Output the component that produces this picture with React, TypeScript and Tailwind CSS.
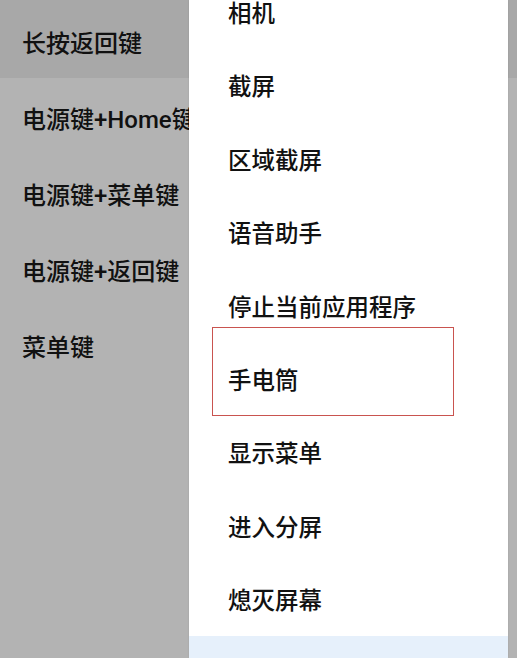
import React from "react";

const leftItems = ["电源键+Home键", "电源键+菜单键", "电源键+返回键", "菜单键"];
const menuItems = ["相机", "截屏", "区域截屏", "语音助手", "停止当前应用程序", "手电筒", "显示菜单", "进入分屏", "熄灭屏幕", ""];

export default function App() {
  return (
    <div
      className="relative w-[517px] h-[658px] overflow-hidden bg-[#b3b3b3] text-[#111111]"
      style={{ fontFamily: 'Roboto, "Noto Sans CJK SC", "Noto Sans", sans-serif' }}
    >
      <div className="flex flex-col">
        <div className="h-[78px] bg-[#a8a8a8] flex items-center pl-[22px] pt-[9px] text-[24px] font-medium whitespace-nowrap">
          长按返回键
        </div>
        <div className="flex flex-col pt-[4px]">
          {leftItems.map((t) => (
            <div key={t} className="h-[76px] flex items-center pl-[22px] text-[24px] font-medium whitespace-nowrap">
              {t}
            </div>
          ))}
        </div>
      </div>

      <div className="absolute left-[189px] top-0 w-[319px] h-[658px] bg-white overflow-hidden shadow-[0_0_2px_rgba(0,0,0,0.1)]">
        <div className="flex flex-col mt-[-22px]">
          {menuItems.map((t, i) => (
            <div
              key={i}
              className={`h-[73.4px] shrink-0 flex items-center pl-[39px] text-[23.5px] font-medium whitespace-nowrap ${
                i === 9 ? "bg-[#e6f0fb] mt-[-3px]" : ""
              }`}
            >
              {t}
            </div>
          ))}
        </div>
        <div className="absolute left-[23px] top-[327px] w-[242px] h-[89px] border border-[#c9534f]" />
      </div>
    </div>
  );
}
